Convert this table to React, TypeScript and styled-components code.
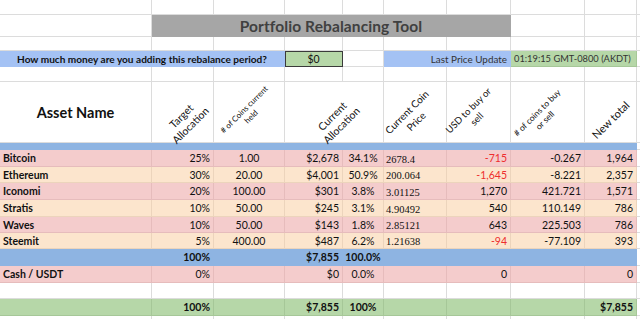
import React from 'react';
import styled, { createGlobalStyle } from 'styled-components';

const COLS = '152px 62px 71px 58px 41px 63px 64px 74px 52px 1fr';

const Global = createGlobalStyle`
  html, body { margin: 0; padding: 0; background: #fff; }
  body { font-family: Lato, "Open Sans", sans-serif; color: #000; }
`;

type Fill = 'none' | 'pink' | 'peach' | 'blue' | 'sky' | 'green' | 'gray';

const BG: Record<Fill, string> = {
  none: '#ffffff',
  pink: '#f4cccc',
  peach: '#fce5cd',
  blue: '#8eb4e2',
  sky: '#a4c2f4',
  green: '#b6d7a8',
  gray: '#a6a6a6',
};

const LINE: Record<Fill, string> = {
  none: '#dcdcdc',
  pink: '#e6bcbc',
  peach: '#ecd4bc',
  blue: '#8eb4e2',
  sky: '#a4c2f4',
  green: '#a6c798',
  gray: '#a6a6a6',
};

const Sheet = styled.div`
  width: 640px;
  height: 319px;
  overflow: hidden;
  display: flex;
  flex-direction: column;
`;

const Row = styled.div<{ $h: number }>`
  display: grid;
  grid-template-columns: ${COLS};
  height: ${(p) => p.$h}px;
  flex: none;
`;

const Cell = styled.div<{
  $fill?: Fill;
  $span?: number;
  $align?: 'left' | 'right' | 'center';
  $bold?: boolean;
  $red?: boolean;
  $serif?: boolean;
  $framed?: boolean;
}>`
  box-sizing: border-box;
  grid-column: span ${(p) => p.$span ?? 1};
  display: flex;
  align-items: center;
  justify-content: ${(p) =>
    p.$align === 'right' ? 'flex-end' : p.$align === 'center' ? 'center' : 'flex-start'};
  padding: ${(p) => (p.$serif ? '2px 2px 0 2px' : '0 3px')};
  background: ${(p) => BG[p.$fill ?? 'none']};
  border-right: 1px solid ${(p) => LINE[p.$fill ?? 'none']};
  border-bottom: 1px solid ${(p) => LINE[p.$fill ?? 'none']};
  ${(p) => (p.$framed ? 'outline: 1px solid #3a3a3a; outline-offset: -1px;' : '')}
  font-family: ${(p) => (p.$serif ? '"Liberation Serif", "Times New Roman", serif' : 'Lato, "Open Sans", sans-serif')};
  font-size: 10.5px;
  font-weight: ${(p) => (p.$bold ? 700 : 400)};
  color: ${(p) => (p.$red ? '#ee2e2e' : '#111')};
  white-space: nowrap;
  overflow: hidden;
`;

const Title = styled(Cell)`
  font-size: 15.5px;
  font-weight: 700;
  color: #404040;
  letter-spacing: 0.1px;
`;

const Question = styled(Cell)`
  font-size: 10.1px;
`;

const InfoText = styled(Cell)<{ $size: number }>`
  color: #333;
  font-size: ${(p) => p.$size}px;
`;

const HeadCell = styled(Cell)`
  overflow: visible;
  justify-content: center;
`;

const AssetHead = styled(HeadCell)`
  font-size: 14.5px;
  font-weight: 700;
`;

const Rot = styled.div<{ $size: number; $dx: number; $dy: number }>`
  transform: translate(${(p) => p.$dx}px, ${(p) => p.$dy}px) rotate(-45deg);
  font-size: ${(p) => p.$size}px;
  line-height: 1.25;
  text-align: center;
  white-space: nowrap;
  color: #111;
`;

type Asset = {
  name: string;
  fill: Fill;
  h: number;
  target: string;
  coins: string;
  value: string;
  pct: string;
  price: string;
  usd: string;
  delta: string;
  total: string;
};

const ASSETS: Asset[] = [
  { name: 'Bitcoin', fill: 'pink', h: 17, target: '25%', coins: '1.00', value: '$2,678', pct: '34.1%', price: '2678.4', usd: '-715', delta: '-0.267', total: '1,964' },
  { name: 'Ethereum', fill: 'peach', h: 16, target: '30%', coins: '20.00', value: '$4,001', pct: '50.9%', price: '200.064', usd: '-1,645', delta: '-8.221', total: '2,357' },
  { name: 'Iconomi', fill: 'pink', h: 17, target: '20%', coins: '100.00', value: '$301', pct: '3.8%', price: '3.01125', usd: '1,270', delta: '421.721', total: '1,571' },
  { name: 'Stratis', fill: 'peach', h: 17, target: '10%', coins: '50.00', value: '$245', pct: '3.1%', price: '4.90492', usd: '540', delta: '110.149', total: '786' },
  { name: 'Waves', fill: 'pink', h: 16, target: '10%', coins: '50.00', value: '$143', pct: '1.8%', price: '2.85121', usd: '643', delta: '225.503', total: '786' },
  { name: 'Steemit', fill: 'peach', h: 16, target: '5%', coins: '400.00', value: '$487', pct: '6.2%', price: '1.21638', usd: '-94', delta: '-77.109', total: '393' },
];

const EmptyRow: React.FC<{ h: number }> = ({ h }) => (
  <Row $h={h}>
    {Array.from({ length: 10 }).map((_, i) => (
      <Cell key={i} />
    ))}
  </Row>
);

export default function App() {
  return (
    <>
      <Global />
      <Sheet>
        <EmptyRow h={15} />
        <Row $h={22}>
          <Cell />
          <Title $fill="gray" $span={6} $align="center">Portfolio Rebalancing Tool</Title>
          <Cell />
          <Cell />
          <Cell />
        </Row>
        <EmptyRow h={14} />
        <Row $h={16}>
          <Question $fill="sky" $span={3} $align="center" $bold>
            How much money are you adding this rebalance period?
          </Question>
          <Cell $fill="green" $align="center" $framed>$0</Cell>
          <Cell />
          <InfoText $size={9.9} $fill="sky" $span={2} $align="right">Last Price Update</InfoText>
          <InfoText $size={9.3} $fill="green" $span={2} $align="left">01:19:15 GMT-0800 (AKDT)</InfoText>
          <Cell />
        </Row>
        <EmptyRow h={15} />
        <Row $h={61}>
          <AssetHead>Asset Name</AssetHead>
          <HeadCell>
            <Rot $size={10.5} $dx={4} $dy={9}>Target<br />Allocation</Rot>
          </HeadCell>
          <HeadCell>
            <Rot $size={8} $dx={-2} $dy={1}>
              # of Coins current<br />held
            </Rot>
          </HeadCell>
          <HeadCell $span={2}>
            <Rot $size={10.5} $dx={3} $dy={9}>Current<br />Allocation</Rot>
          </HeadCell>
          <HeadCell>
            <Rot $size={10} $dx={-4} $dy={4}>Current Coin<br />Price</Rot>
          </HeadCell>
          <HeadCell>
            <Rot $size={9.5} $dx={-6} $dy={3}>USD to buy or<br />sell</Rot>
          </HeadCell>
          <HeadCell>
            <Rot $size={8.5} $dx={-6} $dy={5}># of coins to buy<br />or sell</Rot>
          </HeadCell>
          <HeadCell>
            <Rot $size={11} $dx={0} $dy={8}>New total</Rot>
          </HeadCell>
          <Cell />
        </Row>
        <Row $h={7}>
          <Cell $fill="blue" $span={9} />
          <Cell />
        </Row>
        {ASSETS.map((a) => (
          <Row $h={a.h} key={a.name}>
            <Cell $fill={a.fill} $bold>{a.name}</Cell>
            <Cell $fill={a.fill} $align="right">{a.target}</Cell>
            <Cell $fill={a.fill} $align="center">{a.coins}</Cell>
            <Cell $fill={a.fill} $align="right">{a.value}</Cell>
            <Cell $fill={a.fill} $align="center">{a.pct}</Cell>
            <Cell $fill={a.fill} $serif>{a.price}</Cell>
            <Cell $fill={a.fill} $align="right" $red={a.usd.startsWith('-')}>{a.usd}</Cell>
            <Cell $fill={a.fill} $align="right">{a.delta}</Cell>
            <Cell $fill={a.fill} $align="right">{a.total}</Cell>
            <Cell />
          </Row>
        ))}
        <Row $h={17}>
          <Cell $fill="blue" />
          <Cell $fill="blue" $align="right" $bold>100%</Cell>
          <Cell $fill="blue" />
          <Cell $fill="blue" $align="right" $bold>$7,855</Cell>
          <Cell $fill="blue" $align="center" $bold>100.0%</Cell>
          <Cell $fill="blue" />
          <Cell $fill="blue" />
          <Cell $fill="blue" />
          <Cell $fill="blue" />
          <Cell />
        </Row>
        <Row $h={17}>
          <Cell $fill="pink" $bold>Cash / USDT</Cell>
          <Cell $fill="pink" $align="right">0%</Cell>
          <Cell $fill="pink" />
          <Cell $fill="pink" $align="right">$0</Cell>
          <Cell $fill="pink" $align="center">0.0%</Cell>
          <Cell $fill="pink" />
          <Cell $fill="pink" $align="right">0</Cell>
          <Cell $fill="pink" />
          <Cell $fill="pink" $align="right">0</Cell>
          <Cell />
        </Row>
        <EmptyRow h={16} />
        <Row $h={17}>
          <Cell $fill="green" />
          <Cell $fill="green" $align="right" $bold>100%</Cell>
          <Cell $fill="green" />
          <Cell $fill="green" $align="right" $bold>$7,855</Cell>
          <Cell $fill="green" $align="center" $bold>100%</Cell>
          <Cell $fill="green" />
          <Cell $fill="green" />
          <Cell $fill="green" />
          <Cell $fill="green" $align="right" $bold>$7,855</Cell>
          <Cell />
        </Row>
        <EmptyRow h={10} />
      </Sheet>
    </>
  );
}
